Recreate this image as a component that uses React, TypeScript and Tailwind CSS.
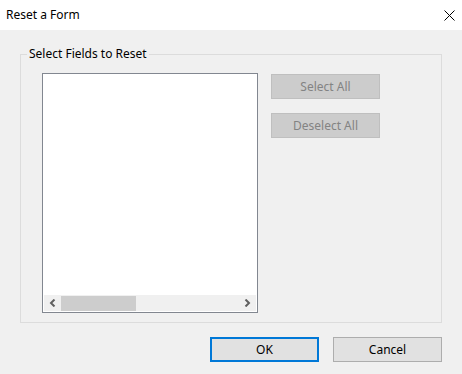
import React from "react";

const font = { fontFamily: '"Segoe UI", "Noto Sans", sans-serif' };

const DialogButton: React.FC<{ label: string; primary?: boolean; disabled?: boolean }> = ({ label, primary, disabled }) => {
  if (disabled) {
    return (
      <button className="w-[109px] h-[25px] bg-[#cccccc] border border-[#bfbfbf] text-[12px] text-[#838383] flex items-center justify-center">
        {label}
      </button>
    );
  }
  return (
    <button
      className={
        primary
          ? "w-[109px] h-[25px] bg-[#e1e1e1] border-2 border-[#0078d7] text-[12px] text-black flex items-center justify-center"
          : "w-[109px] h-[25px] bg-[#e1e1e1] border border-[#adadad] text-[12px] text-black flex items-center justify-center"
      }
    >
      {label}
    </button>
  );
};

const Chevron: React.FC<{ dir: "left" | "right" }> = ({ dir }) => (
  <svg width="7" height="8" viewBox="0 0 7 8" className="shrink-0">
    <path
      d={dir === "left" ? "M5.5 0.5 L2 4 L5.5 7.5" : "M1.5 0.5 L5 4 L1.5 7.5"}
      fill="none"
      stroke="#606060"
      strokeWidth="2"
    />
  </svg>
);

export default function App() {
  return (
    <div className="w-[462px] h-[374px] bg-[#f0f0f0] flex flex-col" style={font}>
      <div className="h-[30px] bg-white flex items-center justify-between pl-[6px] pr-[7px]">
        <span className="text-[12px] text-black">Reset a Form</span>
        <svg width="11" height="11" viewBox="0 0 11 11">
          <path d="M0.5 0.5 L10.5 10.5 M10.5 0.5 L0.5 10.5" stroke="#000" strokeWidth="1" />
        </svg>
      </div>

      <fieldset className="mx-[20px] mt-[16px] border border-[#dcdcdc] pl-[21px] pr-[20px] pt-[11px] pb-[9px] flex">
        <legend className="-ml-[15px] px-[2px] text-[12px] leading-[16px] text-black">Select Fields to Reset</legend>
        <div className="flex">
          <div className="w-[216px] h-[240px] border border-[#828790] bg-white p-[1px] flex flex-col">
            <div className="flex-1" />
            <div className="h-[16px] bg-[#f0f0f0] flex items-center">
              <div className="w-[17px] h-full flex items-center justify-center">
                <Chevron dir="left" />
              </div>
              <div className="w-[75px] h-[15px] bg-[#cdcdcd]" />
              <div className="flex-1" />
              <div className="w-[17px] h-full flex items-center justify-center">
                <Chevron dir="right" />
              </div>
            </div>
          </div>
          <div className="ml-[13px] mt-[1px] flex flex-col gap-[14px]">
            <DialogButton label="Select All" disabled />
            <DialogButton label="Deselect All" disabled />
          </div>
        </div>
      </fieldset>

      <div className="flex justify-end gap-[14px] pr-[20px] mt-[14px]">
        <DialogButton label="OK" primary />
        <DialogButton label="Cancel" />
      </div>
    </div>
  );
}
